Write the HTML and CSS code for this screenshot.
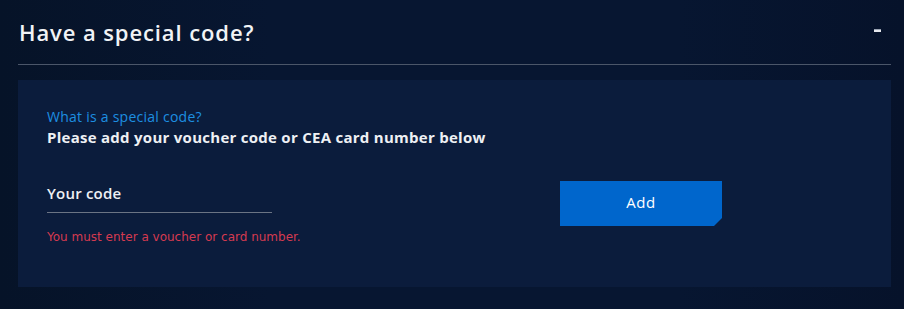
FILE: index.html
```html
<!DOCTYPE html>
<html>
<head>
<meta charset="utf-8">
<link rel="stylesheet" href="styles.css">
</head>
<body>
<div class="wrap">
  <div class="header">
    <h2 class="title">Have a special code?</h2>
    <span class="minus"></span>
  </div>
  <div class="panel">
    <a class="link" href="#">What is a special code?</a>
    <p class="lead">Please add your voucher code or CEA card number below</p>
    <div class="row">
      <div class="field">
        <div class="input">Your code</div>
        <div class="error">You must enter a voucher or card number.</div>
      </div>
      <button class="btn">Add</button>
    </div>
  </div>
</div>
</body>
</html>
```
FILE: styles.css
```css
html, body {
  margin: 0;
  padding: 0;
}
body {
  background: linear-gradient(90deg, #061328 0%, #071631 30%, #071631 75%, #06122a 100%);
  height: 309px;
  overflow: hidden;
  font-family: "Open Sans", Lato, sans-serif;
  color: #eef0f4;
}
.wrap {
  margin: 0 13px 0 18px;
}
.header {
  height: 64px;
  border-bottom: 1px solid #4b5669;
  display: flex;
  align-items: center;
  justify-content: space-between;
  padding: 0 10px 0 1px;
}
.title {
  margin: 0;
  font-size: 22px;
  font-weight: 600;
  letter-spacing: 0.9px;
  color: #f1f3f6;
}
.minus {
  width: 7px;
  height: 2px;
  background: #e6e8ee;
  border-top: 1px solid #9aa3b2;
  margin-top: -4px;
}
.panel {
  margin-top: 15px;
  height: 207px;
  box-sizing: border-box;
  background: #0b1c3c;
  padding: 28px 29px 0 29px;
}
.link {
  display: block;
  color: #1d8fe1;
  text-decoration: none;
  font-size: 14px;
  line-height: 18px;
  letter-spacing: 0.25px;
}
.lead {
  margin: 1px 0 0 0;
  font-size: 15px;
  font-weight: 700;
  line-height: 20px;
  letter-spacing: 0.27px;
  color: #eef0f4;
}
.row {
  display: flex;
  align-items: flex-start;
  margin-top: 34px;
}
.field {
  width: 225px;
}
.input {
  height: 32px;
  box-sizing: border-box;
  border-bottom: 1px solid #6b7484;
  font-size: 15px;
  font-weight: 600;
  line-height: 22px;
  letter-spacing: 0.2px;
  padding-top: 1px;
  color: #eef0f4;
}
.error {
  margin-top: 16px;
  font-family: "DejaVu Sans", Verdana, sans-serif;
  font-size: 12px;
  line-height: 16px;
  white-space: nowrap;
  color: #d53a50;
}
.btn {
  margin-left: 288px;
  width: 162px;
  height: 45px;
  padding: 0 0 3px 0;
  border: 0;
  background: #0066cc;
  color: #ffffff;
  font-family: "Open Sans", Lato, sans-serif;
  font-size: 15px;
  font-weight: 500;
  letter-spacing: 0.5px;
  clip-path: polygon(0 0, 100% 0, 100% calc(100% - 8px), calc(100% - 8px) 100%, 0 100%);
  cursor: pointer;
}
```
